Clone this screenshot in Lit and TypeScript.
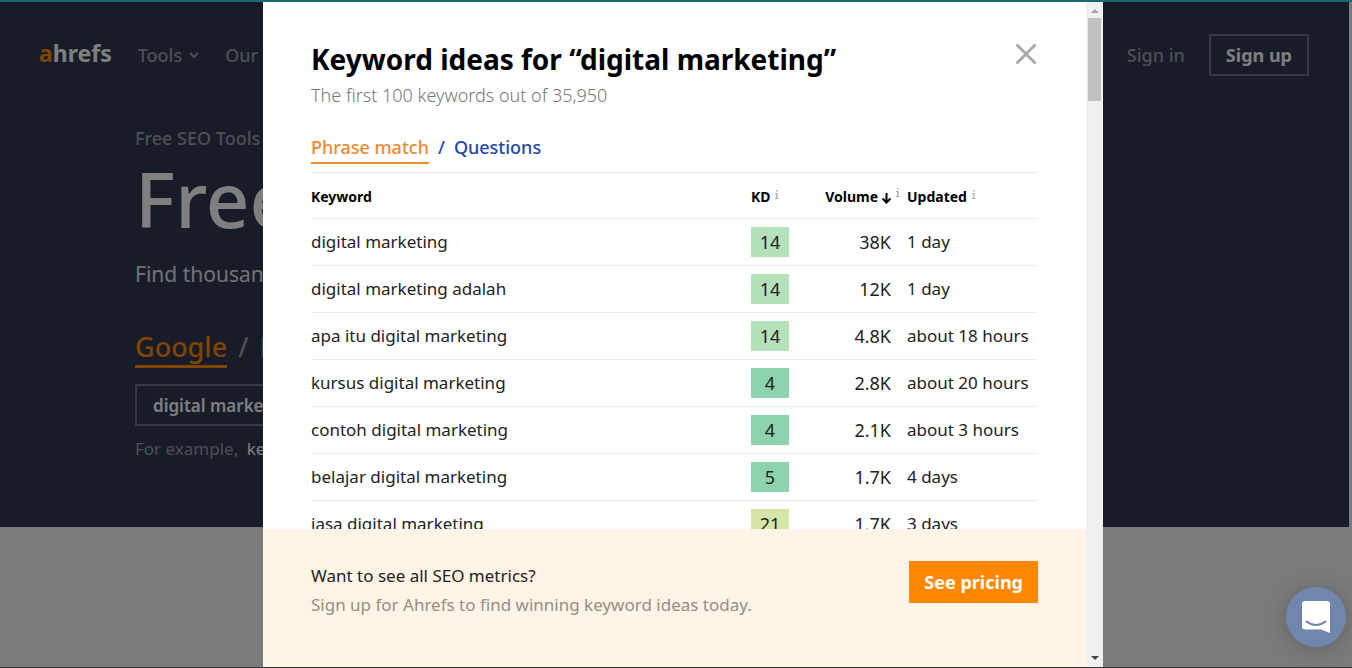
import { LitElement, html, css } from "lit";
import { customElement, state } from "lit/decorators.js";

interface Row {
  keyword: string;
  kd: number;
  volume: string;
  updated: string;
}

const ROWS: Row[] = [
  { keyword: "digital marketing", kd: 14, volume: "38K", updated: "1 day" },
  { keyword: "digital marketing adalah", kd: 14, volume: "12K", updated: "1 day" },
  { keyword: "apa itu digital marketing", kd: 14, volume: "4.8K", updated: "about 18 hours" },
  { keyword: "kursus digital marketing", kd: 4, volume: "2.8K", updated: "about 20 hours" },
  { keyword: "contoh digital marketing", kd: 4, volume: "2.1K", updated: "about 3 hours" },
  { keyword: "belajar digital marketing", kd: 5, volume: "1.7K", updated: "4 days" },
  { keyword: "jasa digital marketing", kd: 21, volume: "1.7K", updated: "3 days" },
];

const FONT = css`"Noto Sans", "Open Sans", sans-serif`;

@customElement("site-header")
export class SiteHeader extends LitElement {
  static styles = css`
    :host {
      display: block;
    }
    .bar {
      display: flex;
      align-items: center;
      gap: 26px;
      padding: 31px 40px 0 39px;
      font: 500 18px/24px ${FONT};
      color: #9a9ea8;
    }
    a {
      color: inherit;
      text-decoration: none;
      white-space: nowrap;
    }
    .logo {
      font-size: 23px;
      line-height: 40px;
      font-weight: 700;
      color: #fff;
      margin-bottom: 4px;
    }
    .logo span {
      color: #ff8800;
    }
    .tools {
      display: flex;
      align-items: center;
      gap: 7px;
    }
    .right {
      display: flex;
      align-items: center;
      gap: 24px;
      margin-left: auto;
    }
    .signup {
      padding: 7px 15px;
      border: 2px solid #6b7282;
      color: #fff;
      font-weight: 700;
    }
  `;

  render() {
    return html`
      <nav class="bar" aria-label="Main">
        <a class="logo" href="#"><span>a</span>hrefs</a>
        <a class="tools" href="#">
          Tools
          <svg width="10" height="7" viewBox="0 0 10 7" fill="none" stroke="currentColor" stroke-width="2">
            <path d="M1 1l4 4 4-4" />
          </svg>
        </a>
        <a href="#">Our data</a>
        <div class="right">
          <a href="#">Sign in</a>
          <a class="signup" href="#">Sign up</a>
        </div>
      </nav>
    `;
  }
}

@customElement("page-hero")
export class PageHero extends LitElement {
  static styles = css`
    :host {
      display: block;
    }
    .hero {
      padding: 49px 135px 66px;
      font: 400 17px/24px ${FONT};
      color: #fff;
    }
    .crumb {
      margin: 0;
      font-size: 18px;
      font-weight: 500;
      color: #9a9ea8;
    }
    h1 {
      margin: 0;
      font-size: 76px;
      line-height: 98px;
      font-weight: 500;
      white-space: nowrap;
    }
    .lead {
      margin: 10px 0 0;
      font-size: 21px;
      line-height: 32px;
      color: #e3e5e9;
    }
    .engines {
      display: flex;
      gap: 11px;
      margin-top: 39px;
      font-size: 27px;
      line-height: 36px;
      font-weight: 500;
      color: #9a9ea8;
    }
    a {
      color: inherit;
      text-decoration: none;
    }
    .engines .current {
      color: #ff8800;
      border-bottom: 3px solid #ff8800;
    }
    input {
      display: block;
      box-sizing: border-box;
      width: 100%;
      max-width: 520px;
      height: 42px;
      margin: 16px 0 11px;
      padding: 0 16px;
      border: 2px solid #6b7282;
      border-radius: 0;
      background: transparent;
      color: #fff;
      font: 600 17px/24px ${FONT};
    }
    .example {
      margin: 0;
      color: #9a9ea8;
    }
    .example a {
      color: #fff;
      margin-left: 4px;
    }
  `;

  render() {
    return html`
      <section class="hero">
        <p class="crumb">Free SEO Tools</p>
        <h1>Free Keyword Generator</h1>
        <p class="lead">Find thousands of relevant keyword ideas in seconds</p>
        <div class="engines">
          <a class="current" href="#">Google</a><span>/</span><a href="#">Bing</a>
        </div>
        <input type="text" aria-label="Keyword" .value=${"digital marketing"} />
        <p class="example">For example, <a href="#">keyword research</a></p>
      </section>
    `;
  }
}

@customElement("keyword-table")
export class KeywordTable extends LitElement {
  static styles = css`
    :host {
      display: block;
    }
    table {
      width: 100%;
      border-collapse: collapse;
      table-layout: fixed;
      font: 400 17px/30px ${FONT};
      color: #222;
    }
    th,
    td {
      padding: 8px 0;
      text-align: left;
      white-space: nowrap;
      border-bottom: 1px solid #ebebeb;
    }
    th {
      padding: 9px 0 6px;
      border-top: 1px solid #ebebeb;
      font-size: 14px;
      font-weight: 700;
      color: #000;
    }
    .kd {
      width: 60px;
    }
    .volume {
      position: relative;
      width: 80px;
      padding-right: 16px;
      text-align: right;
    }
    td.kd,
    td.volume {
      font-size: 18px;
    }
    .updated {
      width: 131px;
    }
    .score {
      display: block;
      width: 38px;
      text-align: center;
      background: #b5e0b9;
    }
    .score.easy {
      background: #8dd3ae;
    }
    .score.medium {
      background: #d5e6a8;
    }
    .info {
      fill: #aaa;
      vertical-align: 2px;
    }
    .volume .info {
      position: absolute;
      right: 7px;
      top: 15px;
    }
    .sort {
      margin-left: 1px;
      vertical-align: -2px;
    }
  `;

  private info() {
    return html`<svg class="info" width="5" height="10" viewBox="0 0 5 10">
      <path d="M2 0h1.500v1.500H2zM1 3h2.500v5H4.500v1H1V8h1.200V4H1z" />
    </svg>`;
  }

  private level(kd: number) {
    return kd < 10 ? "easy" : kd > 20 ? "medium" : "";
  }

  render() {
    return html`
      <table>
        <thead>
          <tr>
            <th>Keyword</th>
            <th class="kd">KD ${this.info()}</th>
            <th class="volume">
              Volume<svg class="sort" width="12" height="12" viewBox="0 0 12 12" fill="none" stroke="#000" stroke-width="2">
                <path d="M7.500 1v9M3.500 6.500l4 4 4-4" />
              </svg>${this.info()}
            </th>
            <th class="updated">Updated ${this.info()}</th>
          </tr>
        </thead>
        <tbody>
          ${ROWS.map(
            (r) => html`<tr>
              <td>${r.keyword}</td>
              <td class="kd"><span class="score ${this.level(r.kd)}">${r.kd}</span></td>
              <td class="volume">${r.volume}</td>
              <td class="updated">${r.updated}</td>
            </tr>`
          )}
        </tbody>
      </table>
    `;
  }
}

@customElement("keyword-dialog")
export class KeywordDialog extends LitElement {
  @state() private tab = "Phrase match";

  static styles = css`
    :host {
      display: block;
      width: 100%;
      max-width: 840px;
      height: 100%;
    }
    .dialog {
      display: flex;
      height: 100%;
      background: #fff;
      font: 400 17px/24px ${FONT};
      color: #222;
    }
    .main {
      display: flex;
      flex: 1;
      flex-direction: column;
      min-width: 0;
    }
    .content {
      flex: 1;
      min-height: 0;
      overflow: hidden;
      padding: 37px 48px 0;
    }
    .head {
      display: flex;
      justify-content: space-between;
      align-items: flex-start;
    }
    h2 {
      margin: 0;
      font-size: 28px;
      line-height: 40px;
      font-weight: 700;
      color: #000;
    }
    .sub {
      margin: 4px 0 0;
      font-size: 18px;
      font-weight: 300;
      color: #777;
    }
    button {
      padding: 0;
      border: 0;
      border-radius: 0;
      background: none;
      font: inherit;
      color: inherit;
      cursor: pointer;
    }
    .close {
      display: flex;
      padding-top: 4px;
      margin-right: 1px;
    }
    .tabs {
      display: flex;
      gap: 9px;
      margin: 28px 0 8px;
      font-size: 18px;
      font-weight: 500;
      color: #1f47a8;
    }
    .tabs button {
      height: 29px;
      padding-bottom: 3px;
      border-bottom: 2px solid transparent;
    }
    .tabs .on {
      color: #ee8a2f;
      border-color: #ee8a2f;
    }
    .promo {
      display: flex;
      justify-content: space-between;
      align-items: flex-start;
      padding: 32px 48px 48px;
      background: #fff4e6;
    }
    .promo p {
      margin: 0;
      line-height: 29px;
    }
    .promo .note {
      color: #968d84;
    }
    .cta {
      padding: 9px 15px;
      background: #ff8800;
      color: #fff;
      font-size: 18px;
      font-weight: 700;
      text-decoration: none;
    }
    .track {
      display: flex;
      flex-direction: column;
      align-items: center;
      width: 17px;
      background: #f0f0f0;
    }
    .thumb {
      width: 13px;
      height: 83px;
      margin-bottom: auto;
      background: #c1c1c1;
    }
  `;

  private tabButton(name: string) {
    return html`<button
      type="button"
      role="tab"
      class=${this.tab === name ? "on" : ""}
      aria-selected=${this.tab === name}
      @click=${() => (this.tab = name)}
    >${name}</button>`;
  }

  render() {
    return html`
      <section class="dialog" role="dialog" aria-labelledby="title">
        <div class="main">
          <div class="content">
            <div class="head">
              <h2 id="title">Keyword ideas for “digital marketing”</h2>
              <button class="close" type="button" aria-label="Close">
                <svg width="22" height="22" viewBox="0 0 22 22" stroke="#aaa" stroke-width="3">
                  <path d="M1.500 1.500l19 19M20.500 1.500l-19 19" />
                </svg>
              </button>
            </div>
            <p class="sub">The first 100 keywords out of 35,950</p>
            <div class="tabs" role="tablist">
              ${this.tabButton("Phrase match")}<span>/</span>${this.tabButton("Questions")}
            </div>
            <keyword-table></keyword-table>
          </div>
          <footer class="promo">
            <div>
              <p>Want to see all SEO metrics?</p>
              <p class="note">Sign up for Ahrefs to find winning keyword ideas today.</p>
            </div>
            <a class="cta" href="#">See pricing</a>
          </footer>
        </div>
        <div class="track" aria-hidden="true">
          <svg width="16" height="16" viewBox="0 0 16 16"><path d="M4 11l4-4 4 4z" fill="#a3a3a3" /></svg>
          <div class="thumb"></div>
          <svg width="16" height="16" viewBox="0 0 16 16"><path d="M4 5l4 4 4-4z" fill="#444" /></svg>
        </div>
      </section>
    `;
  }
}

@customElement("app-root")
export class AppRoot extends LitElement {
  static styles = css`
    :host {
      display: block;
    }
    .frame {
      position: relative;
      box-sizing: border-box;
      height: 100vh;
      overflow: hidden;
      border-top: 2px solid #176a72;
      border-bottom: 1px solid #33353a;
      background: #f6f6f6;
    }
    .top {
      margin-right: 3px;
      background: #2e3850;
    }
    .overlay {
      position: absolute;
      inset: 0;
      box-sizing: border-box;
      display: flex;
      justify-content: center;
      padding-left: 14px;
      background: rgba(0, 0, 0, 0.5);
    }
    .chat {
      position: absolute;
      right: 6px;
      bottom: 20px;
      display: flex;
      align-items: center;
      justify-content: center;
      width: 60px;
      height: 60px;
      padding: 0;
      border: 0;
      border-radius: 50%;
      background: #7086ac;
      box-shadow: 0 2px 24px rgba(0, 0, 0, 0.2);
      cursor: pointer;
    }
  `;

  render() {
    return html`
      <div class="frame">
        <div class="top">
          <site-header></site-header>
          <page-hero></page-hero>
        </div>
        <div class="overlay"><keyword-dialog></keyword-dialog></div>
        <button class="chat" type="button" aria-label="Open chat">
          <svg width="28" height="32" viewBox="0 0 28 32">
            <path fill="#fff" d="M3 0h22a3 3 0 0 1 3 3v29s-4-1.200-8.500-3.500H3a3 3 0 0 1-3-3V3a3 3 0 0 1 3-3z" />
            <path d="M4.500 20.500c5.500 4.500 13.500 4.500 19 0" fill="none" stroke="#7086ac" stroke-width="2" stroke-linecap="round" />
          </svg>
        </button>
      </div>
    `;
  }
}
